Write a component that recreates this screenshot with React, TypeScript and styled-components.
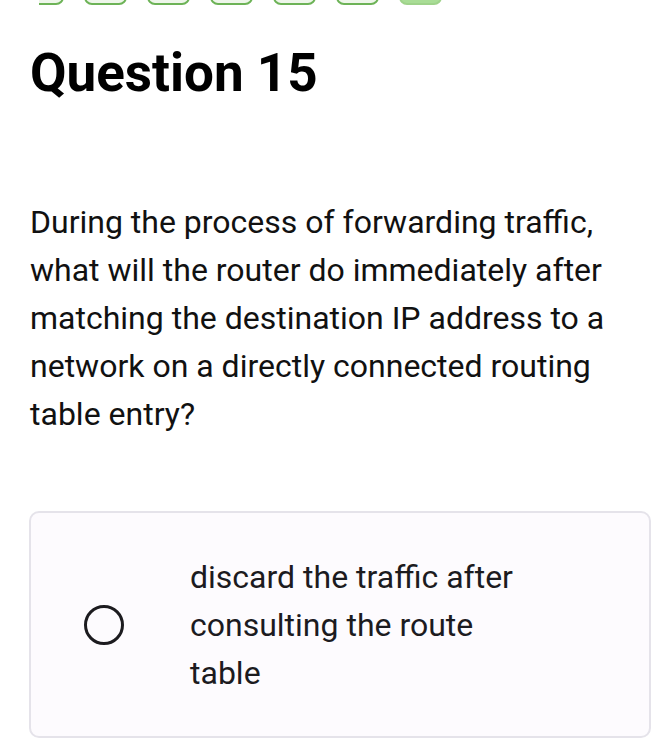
import styled, { createGlobalStyle } from "styled-components";

const Global = createGlobalStyle`
    body {
        margin: 0;
        background: #fff;
        font-family: Roboto, "Noto Sans", sans-serif;
    }
`;

const Page = styled.div`
    width: 669px;
    height: 749px;
    overflow: hidden;
    display: flex;
    flex-direction: column;
`;

// the step strip is scrolled, only its bottom edge peeks in at the top
const StepTrack = styled.div`
    margin-left: 39px;
    margin-top: -25px;
    height: 30px;
    overflow: hidden;
`;

const StepRow = styled.div`
    display: flex;
    gap: 20px;
    margin-left: -18px;
`;

const Step = styled.div<{ $current?: boolean }>`
    width: 43px;
    height: 30px;
    flex-shrink: 0;
    box-sizing: border-box;
    border: 2px solid ${(p) => (p.$current ? "#9fd38b" : "#6db357")};
    border-radius: 8px;
    background: ${(p) => (p.$current ? "#a9dd96" : "#eef6ea")};
`;

const Title = styled.h1`
    margin: 36px 0 0 30px;
    font-size: 53px;
    font-weight: 700;
    color: #000;
    line-height: 64px;
`;

const Prompt = styled.p`
    margin: 93px 0 0 30px;
    width: 600px;
    font-size: 32px;
    line-height: 48px;
    color: #111;
`;

const Option = styled.div`
    margin: 73px 18px 0 29px;
    height: 227px;
    box-sizing: border-box;
    border: 2px solid #e5e3ea;
    border-radius: 10px;
    background: #fdfbfe;
    display: flex;
    align-items: center;
`;

const Radio = styled.div`
    width: 40px;
    height: 40px;
    margin-left: 53px;
    box-sizing: border-box;
    border: 3.5px solid #1c1b1f;
    border-radius: 50%;
    flex-shrink: 0;
`;

const OptionText = styled.div`
    margin-left: 66px;
    width: 340px;
    font-size: 32px;
    line-height: 48px;
    color: #1c1b1f;
`;

const steps = [1, 2, 3, 4, 5, 6, 7];

const App = () => {
    return (
        <Page>
            <Global />
            <StepTrack>
                <StepRow>
                    {steps.map((s) => (
                        <Step key={s} $current={s === 7} />
                    ))}
                </StepRow>
            </StepTrack>
            <Title>Question 15</Title>
            <Prompt>
                During the process of forwarding traffic, what will the router do immediately after
                matching the destination IP address to a network on a directly connected routing
                table entry?
            </Prompt>
            <Option>
                <Radio />
                <OptionText>discard the traffic after consulting the route table</OptionText>
            </Option>
        </Page>
    );
};

export default App;
